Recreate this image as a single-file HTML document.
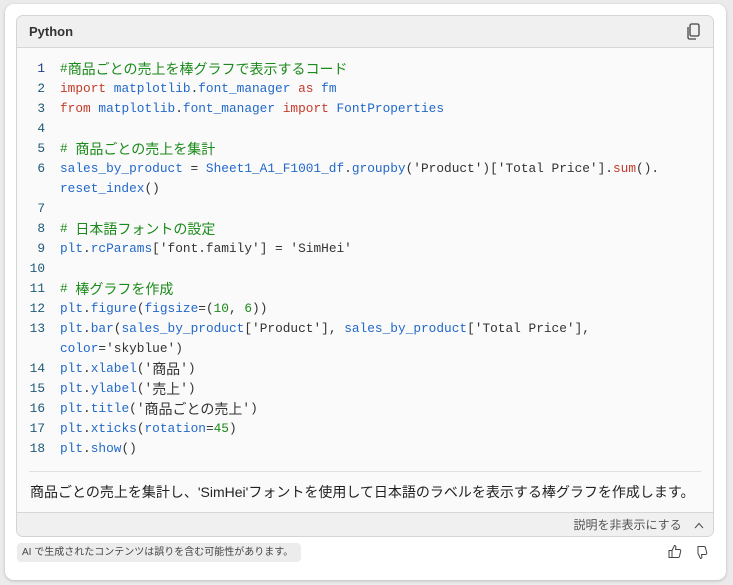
<!DOCTYPE html>
<html><head><meta charset="utf-8"><style>
body{margin:0;width:733px;height:585px;background:#ebebeb;font-family:"Liberation Sans","Noto Sans CJK JP",sans-serif;position:relative;overflow:hidden}
.card{position:absolute;left:5px;top:4px;width:721px;height:576px;background:#fff;border-radius:9px;box-shadow:0 1px 3px rgba(0,0,0,.2)}
.box{position:absolute;left:16px;top:15px;width:696px;height:520px;border:1px solid #d4d4d4;border-radius:7px;background:#fafafa;overflow:hidden}
.hd{height:31px;background:#f0f0f0;border-bottom:1px solid #d6d6d6;font-size:13px;font-weight:bold;color:#333;line-height:31px;padding-left:12px}
.code{position:absolute;left:0;top:43px;font-family:"Liberation Mono","Noto Sans CJK JP",monospace;font-size:12.8px;line-height:20px;color:#333}
.l{position:relative;height:20px;white-space:pre}
.n{position:absolute;left:0;width:28px;text-align:right;color:#1e5a78}
.c{position:absolute;left:43px;top:0;height:20px}
.k{color:#c43b2a}.b{color:#2269c9}.g{color:#1a8a1a}.s{color:#333}
.j{font-size:14px;font-family:"Noto Sans CJK JP",sans-serif;display:inline-block;height:20px;line-height:20px;vertical-align:top}
.sep{position:absolute;left:12px;top:455px;width:672px;height:1px;background:#e0e0e0}
.desc{position:absolute;left:13px;top:466px;font-size:14px;color:#222;line-height:20px;white-space:nowrap}
.ft{position:absolute;left:0;top:496px;width:696px;height:24px;background:#f0f0f0;border-top:1px solid #d6d6d6;font-size:12px;color:#555;text-align:right;line-height:24px}
.pill{position:absolute;left:17px;top:543px;width:284px;height:19px;background:#ececec;border-radius:4px;font-size:10px;color:#444;line-height:19px;padding-left:5px;box-sizing:border-box}
</style></head><body>
<div class="card"></div>
<div class="box">
<div class="hd">Python</div>
<svg style="position:absolute;left:669px;top:7px" width="14" height="17" viewBox="0 0 14 17"><rect x="4" y="1" width="9" height="12" rx="1.5" fill="none" stroke="#444" stroke-width="1.3"/><path d="M2 4v10.5a1.5 1.5 0 0 0 1.5 1.5H10" fill="none" stroke="#444" stroke-width="1.3"/></svg>
<div class="code">
<div class="l"><span class="n" style="color:#1a3a8a">1</span><span class="c g">#<span class="j">商品ごとの売上を棒グラフで表示するコード</span></span></div>
<div class="l"><span class="n">2</span><span class="c"><span class="k">import</span> <span class="b">matplotlib</span>.<span class="b">font_manager</span> <span class="k">as</span> <span class="b">fm</span></span></div>
<div class="l"><span class="n">3</span><span class="c"><span class="k">from</span> <span class="b">matplotlib</span>.<span class="b">font_manager</span> <span class="k">import</span> <span class="b">FontProperties</span></span></div>
<div class="l"><span class="n">4</span></div>
<div class="l"><span class="n">5</span><span class="c g"># <span class="j">商品ごとの売上を集計</span></span></div>
<div class="l"><span class="n">6</span><span class="c"><span class="b">sales_by_product</span> = <span class="b">Sheet1_A1_F1001_df</span>.<span class="b">groupby</span>(<span class="s">'Product'</span>)[<span class="s">'Total Price'</span>].<span class="k">sum</span>().</span></div>
<div class="l"><span class="c"><span class="b">reset_index</span>()</span></div>
<div class="l"><span class="n">7</span></div>
<div class="l"><span class="n">8</span><span class="c g"># <span class="j">日本語フォントの設定</span></span></div>
<div class="l"><span class="n">9</span><span class="c"><span class="b">plt</span>.<span class="b">rcParams</span>[<span class="s">'font.family'</span>] = <span class="s">'SimHei'</span></span></div>
<div class="l"><span class="n">10</span></div>
<div class="l"><span class="n">11</span><span class="c g"># <span class="j">棒グラフを作成</span></span></div>
<div class="l"><span class="n">12</span><span class="c"><span class="b">plt</span>.<span class="b">figure</span>(<span class="b">figsize</span>=(<span class="g">10</span>, <span class="g">6</span>))</span></div>
<div class="l"><span class="n">13</span><span class="c"><span class="b">plt</span>.<span class="b">bar</span>(<span class="b">sales_by_product</span>[<span class="s">'Product'</span>], <span class="b">sales_by_product</span>[<span class="s">'Total Price'</span>],</span></div>
<div class="l"><span class="c"><span class="b">color</span>=<span class="s">'skyblue'</span>)</span></div>
<div class="l"><span class="n">14</span><span class="c"><span class="b">plt</span>.<span class="b">xlabel</span>(<span class="s">'<span class="j">商品</span>'</span>)</span></div>
<div class="l"><span class="n">15</span><span class="c"><span class="b">plt</span>.<span class="b">ylabel</span>(<span class="s">'<span class="j">売上</span>'</span>)</span></div>
<div class="l"><span class="n">16</span><span class="c"><span class="b">plt</span>.<span class="b">title</span>(<span class="s">'<span class="j">商品ごとの売上</span>'</span>)</span></div>
<div class="l"><span class="n">17</span><span class="c"><span class="b">plt</span>.<span class="b">xticks</span>(<span class="b">rotation</span>=<span class="g">45</span>)</span></div>
<div class="l"><span class="n">18</span><span class="c"><span class="b">plt</span>.<span class="b">show</span>()</span></div>
</div>
<div class="sep"></div>
<div class="desc">商品ごとの売上を集計し、'SimHei'フォントを使用して日本語のラベルを表示する棒グラフを作成します。</div>
<div class="ft">説明を非表示にする <span style="display:inline-block;width:28px;text-align:center"><svg width="10" height="7" viewBox="0 0 10 7"><path d="M1 6l4-4.5L9 6" fill="none" stroke="#555" stroke-width="1.1"/></svg></span></div>
</div>
<div class="pill">AI で生成されたコンテンツは誤りを含む可能性があります。</div>
<svg style="position:absolute;left:668px;top:544px" width="14" height="15" viewBox="0 0 14 15"><path d="M4 6.5L6.5 1.5c1 0 1.6.8 1.4 1.8L7.5 5.5H11.5c.9 0 1.4.8 1.2 1.6l-1.2 5.2c-.2.8-.8 1.2-1.5 1.2H4zM1 6.5h3v7H1z" fill="none" stroke="#444" stroke-width="1"/></svg>
<svg style="position:absolute;left:694px;top:545px" width="14" height="15" viewBox="0 0 14 15"><path d="M4 8.5L6.5 13.5c1 0 1.6-.8 1.4-1.8L7.5 9.5H11.5c.9 0 1.4-.8 1.2-1.6L11.5 2.7c-.2-.8-.8-1.2-1.5-1.2H4z" fill="none" stroke="#444" stroke-width="1"/></svg>
</body></html>
